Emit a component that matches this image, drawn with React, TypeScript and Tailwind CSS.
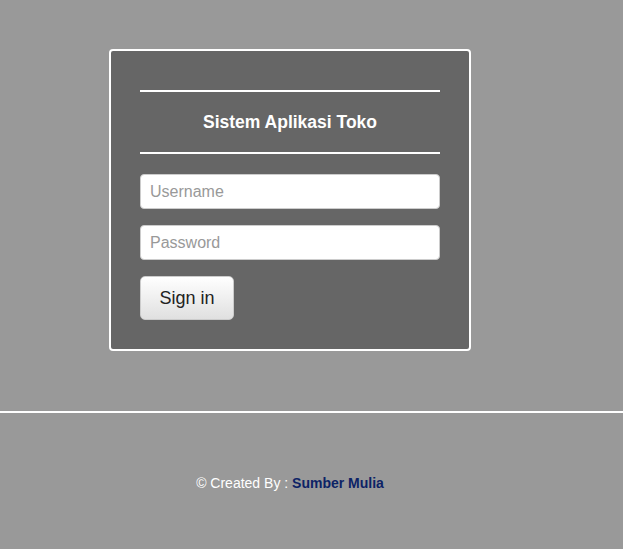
import React from 'react';

export default function App() {
  return (
    <div className="min-h-[549px] bg-[#999999] font-['Liberation_Sans',Arial,sans-serif]">
      <div className="pt-[49px] pl-[109px]">
        <div className="w-[362px] rounded-[4px] border-2 border-white bg-[#666666] px-[29px] pt-[39px] pb-[29px]">
          <div className="h-[2px] bg-white" />
          <h2 className="py-[20px] text-center text-[17.5px] font-bold leading-[20px] text-white">Sistem Aplikasi Toko</h2>
          <div className="h-[2px] bg-white" />
          <form className="mt-[20px] flex flex-col" onSubmit={(e) => e.preventDefault()}>
            <input
              type="text"
              placeholder="Username"
              className="h-[35px] w-full rounded-[4px] border border-[#cccccc] bg-white px-[9px] text-[16px] text-[#555] placeholder:text-[#999999] focus:outline-none"
            />
            <input
              type="password"
              placeholder="Password"
              className="mt-[16px] h-[35px] w-full rounded-[4px] border border-[#cccccc] bg-white px-[9px] text-[16px] text-[#555] placeholder:text-[#999999] focus:outline-none"
            />
            <div className="mt-[16px]">
              <button
                type="submit"
                className="h-[44px] w-[94px] rounded-[5px] border border-[#cccccc] bg-gradient-to-b from-white to-[#e0e0e0] text-[18px] text-[#222]"
              >
                Sign in
              </button>
            </div>
          </form>
        </div>
      </div>
      <div className="mt-[60px] h-[2px] bg-white" />
      <div className="pl-[109px] pt-[60px]">
        <p className="w-[362px] text-center text-[14px] text-white">
          © Created By : <span className="font-bold text-[#0d2366]">Sumber Mulia</span>
        </p>
      </div>
    </div>
  );
}
